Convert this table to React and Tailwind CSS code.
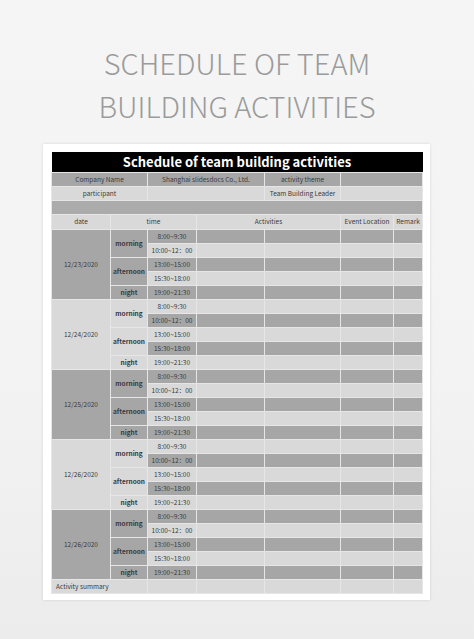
import React from "react";

const DARK = "bg-[#a6a6a6]";
const LIGHT = "bg-[#d9d9d9]";
const cell = "border border-[#e6e6e6] p-0 text-center align-middle leading-none whitespace-nowrap overflow-hidden";

const times = ["8:00~9:30", "10:00~12：00", "13:00~15:00", "15:30~18:00", "19:00~21:30"];
const days = ["12/23/2020", "12/24/2020", "12/25/2020", "12/26/2020", "12/26/2020"];

export default function App() {
  return (
    <div
      className="w-[474px] h-[639px] bg-[linear-gradient(#f5f5f5,#f3f3f3_60%,#ececec)] flex flex-col items-center"
      style={{ fontFamily: '"Noto Sans CJK SC", "Noto Sans", sans-serif' }}
    >
      <div className="pt-[41px] text-[29px] leading-[43px] font-light text-[#9b9b9b] text-center">
        <div>SCHEDULE OF TEAM</div>
        <div>BUILDING ACTIVITIES</div>
      </div>
      <div className="mt-[17px] ml-[-1px] w-[387px] bg-white px-[8px] pt-[8px] pb-[6px] shadow-[0_0_3px_rgba(0,0,0,0.12)]">
        <table className="w-[371px] border-collapse table-fixed text-[6.5px] text-[#3a3a3a]">
          <colgroup>
            <col className="w-[59px]" />
            <col className="w-[37px]" />
            <col className="w-[49px]" />
            <col className="w-[68px]" />
            <col className="w-[76px]" />
            <col className="w-[53px]" />
            <col className="w-[29px]" />
          </colgroup>
          <tbody>
            <tr className="h-[20px]">
              <td colSpan={7} className="bg-black text-white text-[13px] font-bold text-center leading-none p-0">
                Schedule of team building activities
              </td>
            </tr>
            <tr className={`h-[14px] ${DARK}`}>
              <td colSpan={2} className={cell}>Company Name</td>
              <td colSpan={2} className={cell}>Shanghai slidesdocs Co., Ltd.</td>
              <td className={cell}>activity theme</td>
              <td colSpan={2} className={cell}></td>
            </tr>
            <tr className={`h-[14px] ${LIGHT}`}>
              <td colSpan={2} className={cell}>participant</td>
              <td colSpan={2} className={cell}></td>
              <td className={cell}>Team Building Leader</td>
              <td colSpan={2} className={cell}></td>
            </tr>
            <tr className="h-[14px] bg-[#ababab]">
              <td colSpan={7} className={cell}></td>
            </tr>
            <tr className={`h-[15px] ${LIGHT}`}>
              <td className={cell}>date</td>
              <td colSpan={2} className={cell}>time</td>
              <td colSpan={2} className={cell}>Activities</td>
              <td className={cell}>Event Location</td>
              <td className={cell}>Remark</td>
            </tr>
            {days.map((d, di) =>
              times.map((t, ti) => {
                const g = di * 5 + ti;
                const rowBg = g % 2 === 0 ? DARK : LIGHT;
                const dayBg = di % 2 === 0 ? DARK : LIGHT;
                return (
                  <tr key={`${di}-${ti}`} className={`h-[14px] ${rowBg}`}>
                    {ti === 0 && (
                      <td rowSpan={5} className={`${cell} ${dayBg}`}>{d}</td>
                    )}
                    {ti === 0 && (
                      <td rowSpan={2} className={`${cell} ${dayBg} font-bold`}>morning</td>
                    )}
                    {ti === 2 && (
                      <td rowSpan={2} className={`${cell} ${dayBg} font-bold`}>afternoon</td>
                    )}
                    {ti === 4 && (
                      <td className={`${cell} ${dayBg} font-bold`}>night</td>
                    )}
                    <td className={cell}>{t}</td>
                    <td className={cell}></td>
                    <td className={cell}></td>
                    <td className={cell}></td>
                    <td className={cell}></td>
                  </tr>
                );
              })
            )}
            <tr className={`h-[14px] ${LIGHT}`}>
              <td colSpan={2} className={`${cell} text-left pl-[4px]`}>Activity summary</td>
              <td className={cell}></td>
              <td className={cell}></td>
              <td className={cell}></td>
              <td className={cell}></td>
              <td className={cell}></td>
            </tr>
          </tbody>
        </table>
      </div>
    </div>
  );
}
